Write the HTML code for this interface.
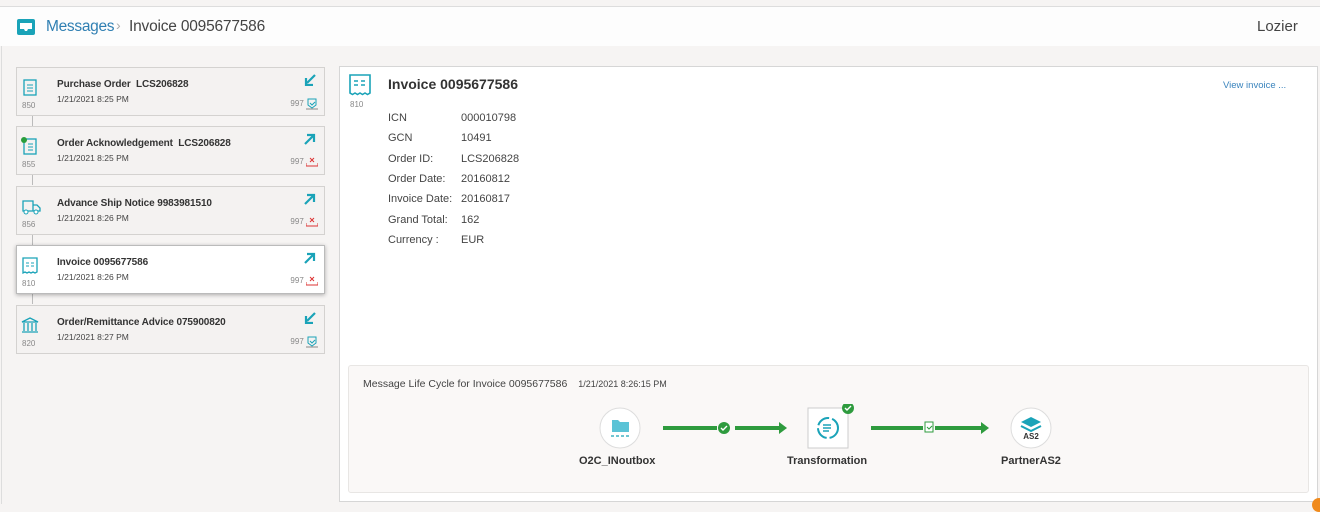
<!DOCTYPE html>
<html><head><style>
*{box-sizing:border-box;margin:0;padding:0}
body{width:1320px;height:504px;background:#f6f4f3;font-family:"Liberation Sans",sans-serif;position:relative;overflow:hidden;color:#333}
.hdr{position:absolute;left:0;top:6px;width:1320px;height:40px;background:#fdfdfd;border-top:1px solid #ddd}
.abs{position:absolute}
.left{position:absolute;left:1px;top:46px;width:338px;height:458px;border-left:1px solid #ddd}
.card{position:absolute;left:16px;width:309px;height:49px;background:#f4f2f1;border:1px solid #d4d2d0}
.card.sel{background:#fff;border-color:#bbb;box-shadow:0 1px 4px rgba(0,0,0,.3)}
.card .t{position:absolute;left:40px;top:11px;font-size:10px;font-weight:bold;color:#333;letter-spacing:-0.1px}
.card .d{position:absolute;left:40px;top:26px;font-size:8.5px;color:#444}
.card .n{position:absolute;left:5px;top:33px;font-size:8px;color:#888}
.card .ic{position:absolute;left:4px;top:10px}
.card .ar{position:absolute;right:8px;top:6px}
.card .s{position:absolute;right:6px;top:30px;font-size:8px;color:#888}
.vl{position:absolute;left:32px;width:1px;height:11px;background:#bbb}
.right{position:absolute;left:339px;top:66px;width:979px;height:436px;background:#fff;border:1px solid #d6d6d6}
.lbl{position:absolute;left:48px;font-size:11px;color:#444}
.val{position:absolute;left:121px;font-size:11px;color:#444}
.lc{position:absolute;left:8px;top:298px;width:961px;height:128px;background:#faf8f7;border:1px solid #e8e6e4;border-radius:3px}
.node{position:absolute;font-size:11px;font-weight:bold;color:#333;text-align:center}
</style></head><body>
<div class="hdr">
 <svg class="abs" style="left:17px;top:12px" width="18" height="16"><rect x="0" y="0" width="18" height="16" rx="2" fill="#1aa3b8"/><path d="M3 4h12v6h-4l-1 2h-2l-1-2H3z" fill="#fff"/></svg>
 <div class="abs" style="left:46px;top:11px;font-size:15.5px;color:#2f7fb2;letter-spacing:-0.3px">Messages</div>
 <div class="abs" style="left:116px;top:10px;font-size:14px;color:#aaa">›</div>
 <div class="abs" style="left:129px;top:11px;font-size:15.5px;color:#444;letter-spacing:-0.2px">Invoice 0095677586</div>
 <div class="abs" style="left:1257px;top:11px;font-size:15px;color:#444">Lozier</div>
</div>
<div class="left"></div>
<div class="vl" style="top:115px"></div><div class="vl" style="top:174px"></div><div class="vl" style="top:234px"></div><div class="vl" style="top:293px"></div>

<div class="card" style="top:67px">
 <svg class="ic" width="18" height="20"><rect x="3" y="2" width="12" height="15" fill="none" stroke="#1aa3b8" stroke-width="1.3"/><path d="M6 7h6M6 10h6M6 13h6" stroke="#1aa3b8"/></svg>
 <div class="n">850</div><div class="t">Purchase Order&nbsp; LCS206828</div><div class="d">1/21/2021 8:25 PM</div>
 <svg class="ar" width="12" height="12"><path d="M11 1L3 9M2 4v7h7" stroke="#1aa3b8" stroke-width="2.2" fill="none"/></svg>
 <div class="s">997 <svg width="12" height="12" style="vertical-align:middle"><path d="M2 1h8v6l-4 3-4-3z" fill="none" stroke="#1aa3b8"/><path d="M4 5l2 2 3-3" stroke="#1aa3b8" fill="none"/><path d="M0 11h12" stroke="#888"/></svg></div>
</div>
<div class="card" style="top:126px">
 <svg class="ic" width="18" height="20"><rect x="3" y="2" width="12" height="15" fill="none" stroke="#1aa3b8" stroke-width="1.3"/><path d="M7 7h5M7 10h5M7 13h5" stroke="#1aa3b8"/><circle cx="3" cy="3" r="3" fill="#2a9d3c"/></svg>
 <div class="n">855</div><div class="t">Order Acknowledgement&nbsp; LCS206828</div><div class="d">1/21/2021 8:25 PM</div>
 <svg class="ar" width="12" height="12"><path d="M1 11L9 3M3 2h7v7" stroke="#1aa3b8" stroke-width="2.2" fill="none"/></svg>
 <div class="s">997 <svg width="12" height="10" style="vertical-align:middle"><path d="M4 1l4 4M8 1L4 5" stroke="#d33"/><path d="M0 6v3h12V6" stroke="#d33" fill="none"/></svg></div>
</div>
<div class="card" style="top:186px">
 <svg class="ic" width="20" height="20"><path d="M2 4h10v10H2zM12 8h4l3 3v3h-7" fill="none" stroke="#1aa3b8" stroke-width="1.3"/><circle cx="5" cy="15" r="2" fill="#fff" stroke="#1aa3b8"/><circle cx="15" cy="15" r="2" fill="#fff" stroke="#1aa3b8"/></svg>
 <div class="n">856</div><div class="t">Advance Ship Notice 9983981510</div><div class="d">1/21/2021 8:26 PM</div>
 <svg class="ar" width="12" height="12"><path d="M1 11L9 3M3 2h7v7" stroke="#1aa3b8" stroke-width="2.2" fill="none"/></svg>
 <div class="s">997 <svg width="12" height="10" style="vertical-align:middle"><path d="M4 1l4 4M8 1L4 5" stroke="#d33"/><path d="M0 6v3h12V6" stroke="#d33" fill="none"/></svg></div>
</div>
<div class="card sel" style="top:245px">
 <svg class="ic" width="18" height="20"><path d="M2 2h14v14l-2 1-2-1-2 1-2-1-2 1-2-1-2 1z" fill="none" stroke="#1aa3b8" stroke-width="1.3"/><path d="M5 7h3M10 7h3M5 10h3M10 10h3" stroke="#1aa3b8"/></svg>
 <div class="n">810</div><div class="t">Invoice 0095677586</div><div class="d">1/21/2021 8:26 PM</div>
 <svg class="ar" width="12" height="12"><path d="M1 11L9 3M3 2h7v7" stroke="#1aa3b8" stroke-width="2.2" fill="none"/></svg>
 <div class="s">997 <svg width="12" height="10" style="vertical-align:middle"><path d="M4 1l4 4M8 1L4 5" stroke="#d33"/><path d="M0 6v3h12V6" stroke="#d33" fill="none"/></svg></div>
</div>
<div class="card" style="top:305px">
 <svg class="ic" width="18" height="20"><path d="M1 6L9 2l8 4zM3 7v8M7 7v8M11 7v8M15 7v8M1 16h16" fill="none" stroke="#1aa3b8" stroke-width="1.3"/></svg>
 <div class="n">820</div><div class="t">Order/Remittance Advice 075900820</div><div class="d">1/21/2021 8:27 PM</div>
 <svg class="ar" width="12" height="12"><path d="M11 1L3 9M2 4v7h7" stroke="#1aa3b8" stroke-width="2.2" fill="none"/></svg>
 <div class="s">997 <svg width="12" height="12" style="vertical-align:middle"><path d="M2 1h8v6l-4 3-4-3z" fill="none" stroke="#1aa3b8"/><path d="M4 5l2 2 3-3" stroke="#1aa3b8" fill="none"/><path d="M0 11h12" stroke="#888"/></svg></div>
</div>

<div class="right">
 <svg class="abs" style="left:8px;top:7px" width="24" height="24"><path d="M2 1h20v18l-2.5 1.5-2.5-1.5-2.5 1.5-2.5-1.5-2.5 1.5-2.5-1.5-2.5 1.5-2.5-1.5z" fill="none" stroke="#1aa3b8" stroke-width="1.6"/><path d="M6 7h4M13 7h4M6 11h4M13 11h4" stroke="#1aa3b8" stroke-width="1.5"/></svg>
 <div class="abs" style="left:10px;top:33px;font-size:8px;color:#888">810</div>
 <div class="abs" style="left:48px;top:9px;font-size:14px;font-weight:bold;color:#333">Invoice 0095677586</div>
 <div class="abs" style="left:883px;top:13px;font-size:9.5px;color:#3a84bd">View invoice ...</div>
 <div class="lbl" style="top:45px">ICN</div><div class="val" style="top:45px">000010798</div>
 <div class="lbl" style="top:65px">GCN</div><div class="val" style="top:65px">10491</div>
 <div class="lbl" style="top:86px">Order ID:</div><div class="val" style="top:86px">LCS206828</div>
 <div class="lbl" style="top:106px">Order Date:</div><div class="val" style="top:106px">20160812</div>
 <div class="lbl" style="top:126px">Invoice Date:</div><div class="val" style="top:126px">20160817</div>
 <div class="lbl" style="top:147px">Grand Total:</div><div class="val" style="top:147px">162</div>
 <div class="lbl" style="top:167px">Currency :</div><div class="val" style="top:167px">EUR</div>
 <div class="lc">
  <div class="abs" style="left:14px;top:12px;font-size:10.5px;color:#444">Message Life Cycle for Invoice 0095677586 <span style="font-size:9px;margin-left:8px">1/21/2021 8:26:15 PM</span></div>
  <svg class="abs" style="left:250px;top:38px" width="700" height="50">
   <circle cx="21" cy="24" r="20" fill="#fff" stroke="#ddd"/>
   <path d="M13 16h6l2 2h9v10H13z" fill="#5bc3d6"/><path d="M12 32h18" stroke="#1aa3b8" stroke-width="1.3" stroke-dasharray="3 2"/>
   <rect x="64" y="22" width="54" height="4" fill="#2e9b3e"/><circle cx="125" cy="24" r="6" fill="#2e9b3e"/><path d="M122 24l2 2 4-4" stroke="#fff" stroke-width="1.4" fill="none"/>
   <rect x="136" y="22" width="44" height="4" fill="#2e9b3e"/><path d="M180 18l8 6-8 6z" fill="#2e9b3e"/>
   <rect x="209" y="4" width="40" height="40" fill="#fff" stroke="#ccc"/>
   <circle cx="229" cy="24" r="10" fill="none" stroke="#1aa3b8" stroke-width="2" stroke-dasharray="14 3"/><path d="M224 21h8M224 24h8M224 27h6" stroke="#1aa3b8" stroke-width="1.5"/>
   <circle cx="249" cy="4" r="6" fill="#2e9b3e"/><path d="M246 4l2 2 4-4" stroke="#fff" stroke-width="1.4" fill="none"/>
   <rect x="272" y="22" width="52" height="4" fill="#2e9b3e"/><rect x="326" y="18" width="8" height="10" fill="#fff" stroke="#2e9b3e"/><path d="M328 23l2 2 3-3" stroke="#2e9b3e" fill="none"/>
   <rect x="336" y="22" width="46" height="4" fill="#2e9b3e"/><path d="M382 18l8 6-8 6z" fill="#2e9b3e"/>
   <circle cx="432" cy="24" r="20" fill="#fff" stroke="#ddd"/>
   <path d="M422 18l10-5 10 5-10 5z" fill="#1aa3b8"/><path d="M422 22l10 5 10-5" stroke="#1aa3b8" stroke-width="2" fill="none"/>
   <text x="432" y="35" font-size="8" font-weight="bold" text-anchor="middle" fill="#333" font-family="Liberation Sans">AS2</text>
  </svg>
  <div class="node" style="left:230px;top:89px">O2C_INoutbox</div>
  <div class="node" style="left:438px;top:89px">Transformation</div>
  <div class="node" style="left:652px;top:89px">PartnerAS2</div>
 </div>
</div>
<div class="abs" style="left:1312px;top:498px;width:14px;height:14px;border-radius:50%;background:#f08a1c"></div>
</body></html>
